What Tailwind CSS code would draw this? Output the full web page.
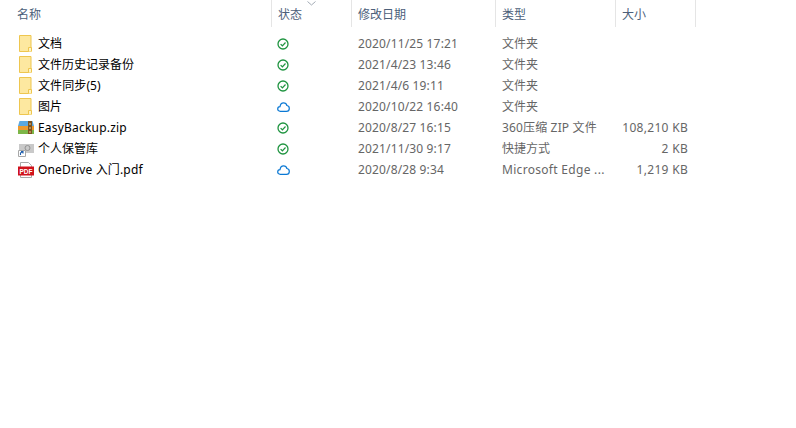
<!DOCTYPE html>
<html lang="zh">
<head>
<meta charset="utf-8">
<script src="https://cdn.jsdelivr.net/npm/@tailwindcss/browser@4"></script>
</head>
<body class="bg-white">
<div class="w-[796px] h-[428px] overflow-hidden bg-white text-[12px] leading-[21px] text-[#666666] font-['Noto_Sans','Noto_Sans_CJK_SC',sans-serif]">
  <div class="relative grid grid-cols-[272px_80px_144px_120px_80px] h-[27px] w-[696px] text-[#4c607a]">
    <div class="pl-[17px] pt-[4px] border-r border-[#e5e5e5]">名称</div>
    <div class="pl-[6px] pt-[4px] border-r border-[#e5e5e5]">状态</div>
    <div class="pl-[6px] pt-[4px] border-r border-[#e5e5e5]">修改日期</div>
    <div class="pl-[6px] pt-[4px] border-r border-[#e5e5e5]">类型</div>
    <div class="pl-[6px] pt-[4px] border-r border-[#e5e5e5]">大小</div>
    <svg class="absolute left-[307px] top-[1px]" width="9" height="5" viewBox="0 0 9 5" fill="none"><path d="M.5.5 4.500 4 8.500.5" stroke="#a3abb5"/></svg>
  </div>
  <div class="pt-[6px] w-[696px]">

    <div class="grid grid-cols-[272px_80px_144px_120px_80px] h-[21px]">
      <div class="flex items-center pl-[19px] text-black">
        <svg class="mr-[6px] shrink-0" width="13" height="17" viewBox="0 0 13 17"><path d="M.5.5h11.500v16H.5z" fill="#fde8a0" stroke="#eec64f"/><path d="M9.500 16.500v-4h3v4" fill="#fff3c4" stroke="#eec64f"/></svg>
        <span>文档</span>
      </div>
      <div class="flex items-center pl-[5px]"><svg width="12" height="12" viewBox="0 0 12 12" fill="none"><circle cx="6" cy="6" r="5" stroke="#1f9440" stroke-width="1.300"/><path d="M3.600 6.100 5.400 7.800 8.500 4.500" stroke="#1f9440" stroke-width="1.200"/></svg></div>
      <div class="pl-[6px] tracking-[0.15px]">2020/11/25 17:21</div>
      <div class="pl-[6px]">文件夹</div>
      <div></div>
    </div>

    <div class="grid grid-cols-[272px_80px_144px_120px_80px] h-[21px]">
      <div class="flex items-center pl-[19px] text-black">
        <svg class="mr-[6px] shrink-0" width="13" height="17" viewBox="0 0 13 17"><path d="M.5.5h11.500v16H.5z" fill="#fde8a0" stroke="#eec64f"/><path d="M9.500 16.500v-4h3v4" fill="#fff3c4" stroke="#eec64f"/></svg>
        <span>文件历史记录备份</span>
      </div>
      <div class="flex items-center pl-[5px]"><svg width="12" height="12" viewBox="0 0 12 12" fill="none"><circle cx="6" cy="6" r="5" stroke="#1f9440" stroke-width="1.300"/><path d="M3.600 6.100 5.400 7.800 8.500 4.500" stroke="#1f9440" stroke-width="1.200"/></svg></div>
      <div class="pl-[6px] tracking-[0.15px]">2021/4/23 13:46</div>
      <div class="pl-[6px]">文件夹</div>
      <div></div>
    </div>

    <div class="grid grid-cols-[272px_80px_144px_120px_80px] h-[21px]">
      <div class="flex items-center pl-[19px] text-black">
        <svg class="mr-[6px] shrink-0" width="13" height="17" viewBox="0 0 13 17"><path d="M.5.5h11.500v16H.5z" fill="#fde8a0" stroke="#eec64f"/><path d="M9.500 16.500v-4h3v4" fill="#fff3c4" stroke="#eec64f"/></svg>
        <span class="tracking-[0.1px]">文件同步(5)</span>
      </div>
      <div class="flex items-center pl-[5px]"><svg width="12" height="12" viewBox="0 0 12 12" fill="none"><circle cx="6" cy="6" r="5" stroke="#1f9440" stroke-width="1.300"/><path d="M3.600 6.100 5.400 7.800 8.500 4.500" stroke="#1f9440" stroke-width="1.200"/></svg></div>
      <div class="pl-[6px] tracking-[0.15px]">2021/4/6 19:11</div>
      <div class="pl-[6px]">文件夹</div>
      <div></div>
    </div>

    <div class="grid grid-cols-[272px_80px_144px_120px_80px] h-[21px]">
      <div class="flex items-center pl-[19px] text-black">
        <svg class="mr-[6px] shrink-0" width="13" height="17" viewBox="0 0 13 17"><path d="M.5.5h11.500v16H.5z" fill="#fde8a0" stroke="#eec64f"/><path d="M9.500 16.500v-4h3v4" fill="#fff3c4" stroke="#eec64f"/></svg>
        <span>图片</span>
      </div>
      <div class="flex items-center pl-[5px]"><svg width="13" height="10" viewBox="0 0 13 10" fill="none"><path d="M3.300 9.300C1.700 9.300.7 8.300.7 7c0-1.300 1-2.300 2.300-2.300C3.300 2.300 4.800.8 6.600.8c1.600 0 2.900 1.100 3.300 2.700 1.400.2 2.400 1.400 2.400 2.900 0 1.700-1.200 2.900-2.900 2.900z" stroke="#0a78d4" stroke-width="1.200"/></svg></div>
      <div class="pl-[6px] tracking-[0.15px]">2020/10/22 16:40</div>
      <div class="pl-[6px]">文件夹</div>
      <div></div>
    </div>

    <div class="grid grid-cols-[272px_80px_144px_120px_80px] h-[21px]">
      <div class="flex items-center pl-[18px] text-black">
        <svg class="mr-[4px] shrink-0" width="16" height="14" viewBox="0 0 16 14"><path d="M0 5 1.500 0h13L16 5z" fill="#5ba8e0"/><path d="M0 5h16v4H0z" fill="#ee9a2e"/><path d="M0 9h16v4H0z" fill="#7db648"/><path d="M10 0h4v13h-4z" fill="#7d5220"/><path d="M11.500 2h1v2h-1zM11.500 6h1v2h-1zM11.500 10h1v2h-1z" fill="#e8c98d"/></svg>
        <span class="tracking-[0.2px]">EasyBackup.zip</span>
      </div>
      <div class="flex items-center pl-[5px]"><svg width="12" height="12" viewBox="0 0 12 12" fill="none"><circle cx="6" cy="6" r="5" stroke="#1f9440" stroke-width="1.300"/><path d="M3.600 6.100 5.400 7.800 8.500 4.500" stroke="#1f9440" stroke-width="1.200"/></svg></div>
      <div class="pl-[6px] tracking-[0.15px]">2020/8/27 16:15</div>
      <div class="pl-[6px] tracking-[0.15px]">360压缩 ZIP 文件</div>
      <div class="text-right pr-[8px] tracking-[0.3px]">108,210 KB</div>
    </div>

    <div class="grid grid-cols-[272px_80px_144px_120px_80px] h-[21px]">
      <div class="flex items-center pl-[18px] text-black">
        <svg class="mr-[4px] shrink-0" width="16" height="16" viewBox="0 0 16 16"><path d="M1 3h15v9H1z" fill="#c9c9c9"/><circle cx="9.500" cy="7" r="2.500" fill="none" stroke="#939393"/><path d="M.5 9.500h7v6h-7z" fill="#fff" stroke="#a8a8a8"/><path d="M2.500 14v-2l2-1.500M3 10.500h2v2" fill="none" stroke="#1f5fae" stroke-width="1.100"/></svg>
        <span>个人保管库</span>
      </div>
      <div class="flex items-center pl-[5px]"><svg width="12" height="12" viewBox="0 0 12 12" fill="none"><circle cx="6" cy="6" r="5" stroke="#1f9440" stroke-width="1.300"/><path d="M3.600 6.100 5.400 7.800 8.500 4.500" stroke="#1f9440" stroke-width="1.200"/></svg></div>
      <div class="pl-[6px] tracking-[0.15px]">2021/11/30 9:17</div>
      <div class="pl-[6px]">快捷方式</div>
      <div class="text-right pr-[8px] tracking-[0.3px]">2 KB</div>
    </div>

    <div class="grid grid-cols-[272px_80px_144px_120px_80px] h-[21px]">
      <div class="flex items-center pl-[18px] text-black">
        <svg class="mr-[4px] shrink-0" width="16" height="16" viewBox="0 0 16 16"><path d="M2.500.5h8l3 3v12h-11z" fill="#fff" stroke="#a8a8a8"/><path d="M0 4.500h16v9H0z" fill="#d0121b"/><text x="8" y="11.500" text-anchor="middle" fill="#fff" font-size="6.500" font-weight="700" font-family="Liberation Sans, sans-serif">PDF</text></svg>
        <span class="tracking-[0.15px]">OneDrive 入门.pdf</span>
      </div>
      <div class="flex items-center pl-[5px]"><svg width="13" height="10" viewBox="0 0 13 10" fill="none"><path d="M3.300 9.300C1.700 9.300.7 8.300.7 7c0-1.300 1-2.300 2.300-2.300C3.300 2.300 4.800.8 6.600.8c1.600 0 2.900 1.100 3.300 2.700 1.400.2 2.400 1.400 2.400 2.900 0 1.700-1.200 2.900-2.900 2.900z" stroke="#0a78d4" stroke-width="1.200"/></svg></div>
      <div class="pl-[6px] tracking-[0.15px]">2020/8/28 9:34</div>
      <div class="pl-[6px] tracking-[0.3px]">Microsoft Edge ...</div>
      <div class="text-right pr-[8px] tracking-[0.3px]">1,219 KB</div>
    </div>

  </div>
</div>
</body>
</html>
